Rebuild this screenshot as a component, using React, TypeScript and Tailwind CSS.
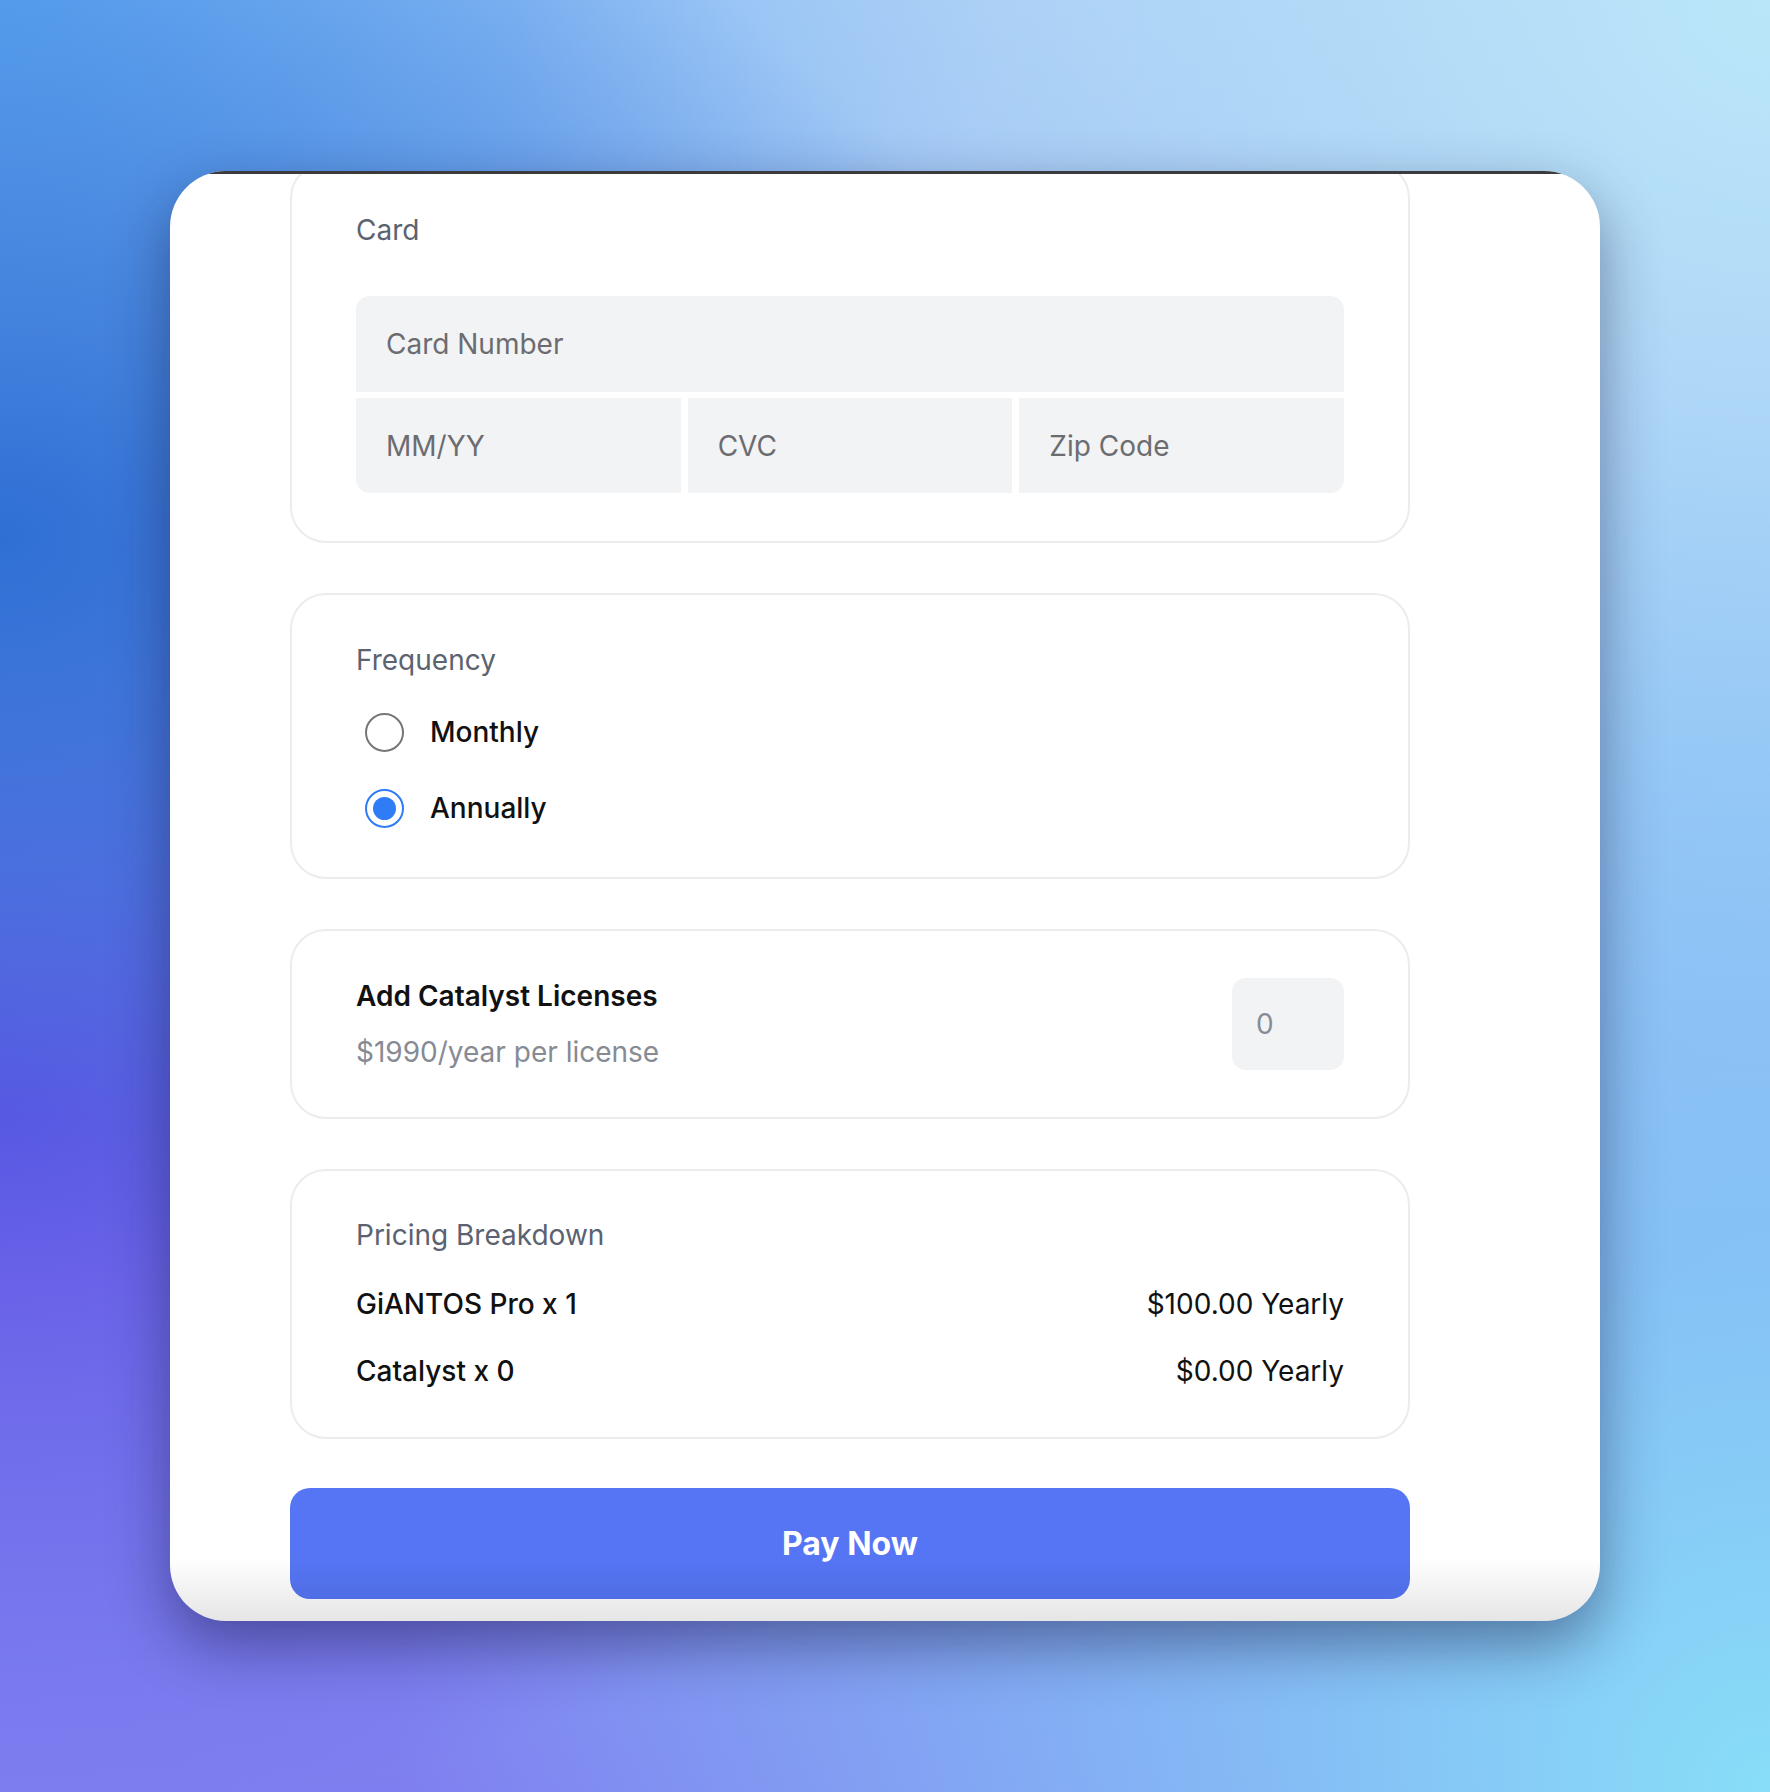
import { useState } from "react";

function Section({ className, children }: { className?: string; children: React.ReactNode }) {
  return (
    <div className={`rounded-[36px] border-2 border-[#ececee] bg-white px-16 ${className ?? ""}`}>
      {children}
    </div>
  );
}

function Radio({ checked, label, onClick }: { checked: boolean; label: string; onClick: () => void }) {
  return (
    <button type="button" onClick={onClick} className="flex h-10 items-center gap-[26px] pl-[9px] text-left">
      <span
        className={`flex h-[39px] w-[39px] items-center justify-center rounded-full border-2 ${
          checked ? "border-[#2f7cf6]" : "border-[#767676]"
        }`}
      >
        {checked && <span className="h-[23px] w-[23px] rounded-full bg-[#2f7cf6]" />}
      </span>
      <span className="text-[28px] font-medium leading-10 text-[#111111]">{label}</span>
    </button>
  );
}

export default function App() {
  const [frequency, setFrequency] = useState("annually");
  const [licenses, setLicenses] = useState("0");
  const count = Number(licenses) || 0;
  const yearly = frequency === "annually";

  return (
    <div
      className="flex h-[1792px] w-full items-center justify-center bg-[radial-gradient(ellipse_at_0%_30%,#2f6fd4_0%,transparent_42%),radial-gradient(ellipse_at_0%_62%,#6252e6_0%,transparent_45%),radial-gradient(ellipse_at_100%_100%,#88def8_0%,transparent_55%),radial-gradient(ellipse_at_100%_0%,#bae6f9_0%,transparent_50%),radial-gradient(ellipse_at_0%_0%,#62acf4_0%,transparent_40%),linear-gradient(180deg,#a4c4f4_0%,#84a6f2_45%,#7f7ef0_100%)]"
      style={{ fontFamily: "Inter, 'Noto Sans', sans-serif" }}
    >
      <div className="relative h-[1450px] w-[1430px] overflow-hidden rounded-[56px] bg-white shadow-[0_24px_60px_rgba(20,20,60,0.45)]">
        <div className="absolute inset-x-0 top-0 z-10 h-[3px] bg-[#3b3b3e]" />

        <div className="-mt-[9px] ml-[120px] flex w-[1120px] flex-col gap-[50px]">
          <Section className="pt-[46px] pb-[48px]">
            <div className="text-[28px] leading-10 text-[#5b6270]">Card</div>
            <div className="mt-[46px] flex flex-col gap-[6px]">
              <input
                placeholder="Card Number"
                className="h-[96px] w-full rounded-t-[14px] bg-[#f2f3f5] px-[30px] text-[28px] text-[#222] outline-none placeholder:text-[#6c6c70]"
              />
              <div className="grid grid-cols-3 gap-[7px]">
                <input
                  placeholder="MM/YY"
                  className="h-[95px] w-full min-w-0 rounded-bl-[14px] bg-[#f2f3f5] px-[30px] text-[28px] text-[#222] outline-none placeholder:text-[#6c6c70]"
                />
                <input
                  placeholder="CVC"
                  className="h-[95px] w-full min-w-0 bg-[#f2f3f5] px-[30px] text-[28px] text-[#222] outline-none placeholder:text-[#6c6c70]"
                />
                <input
                  placeholder="Zip Code"
                  className="h-[95px] w-full min-w-0 rounded-br-[14px] bg-[#f2f3f5] px-[30px] text-[28px] text-[#222] outline-none placeholder:text-[#6c6c70]"
                />
              </div>
            </div>
          </Section>

          <Section className="pt-[45px] pb-[49px]">
            <div className="text-[28px] leading-10 text-[#5b6270]">Frequency</div>
            <div className="mt-8 flex flex-col gap-9">
              <Radio checked={frequency === "monthly"} label="Monthly" onClick={() => setFrequency("monthly")} />
              <Radio checked={frequency === "annually"} label="Annually" onClick={() => setFrequency("annually")} />
            </div>
          </Section>

          <Section className="flex items-center justify-between py-[45px]">
            <div className="flex flex-col gap-4">
              <div className="text-[28px] font-semibold leading-10 text-[#111111]">Add Catalyst Licenses</div>
              <div className="text-[28px] leading-10 text-[#868b94]">$1990/year per license</div>
            </div>
            <input
              value={licenses}
              onChange={(e) => setLicenses(e.target.value)}
              className="h-[92px] w-[112px] rounded-[14px] bg-[#f2f3f5] px-[24px] text-[28px] text-[#878c95] outline-none"
            />
          </Section>

          <Section className="pt-[44px] pb-[46px]">
            <div className="text-[28px] leading-10 text-[#5b6270]">Pricing Breakdown</div>
            <div className="mt-[29px] flex flex-col gap-[27px]">
              <div className="flex items-center justify-between text-[28px] leading-10 text-[#111111]">
                <span className="font-medium">GiANTOS Pro x 1</span>
                <span>{yearly ? "$100.00 Yearly" : "$10.00 Monthly"}</span>
              </div>
              <div className="flex items-center justify-between text-[28px] leading-10 text-[#111111]">
                <span className="font-medium">Catalyst x {count}</span>
                <span>${(count * 1990).toFixed(2)} Yearly</span>
              </div>
            </div>
          </Section>

          <button
            type="button"
            className="-mt-px h-[111px] w-full rounded-[20px] bg-[#5575f4] text-[32px] font-bold text-white"
          >
            Pay Now
          </button>
        </div>

        <div className="pointer-events-none absolute inset-x-0 bottom-0 h-[64px] bg-gradient-to-b from-transparent to-black/10" />
      </div>
    </div>
  );
}
